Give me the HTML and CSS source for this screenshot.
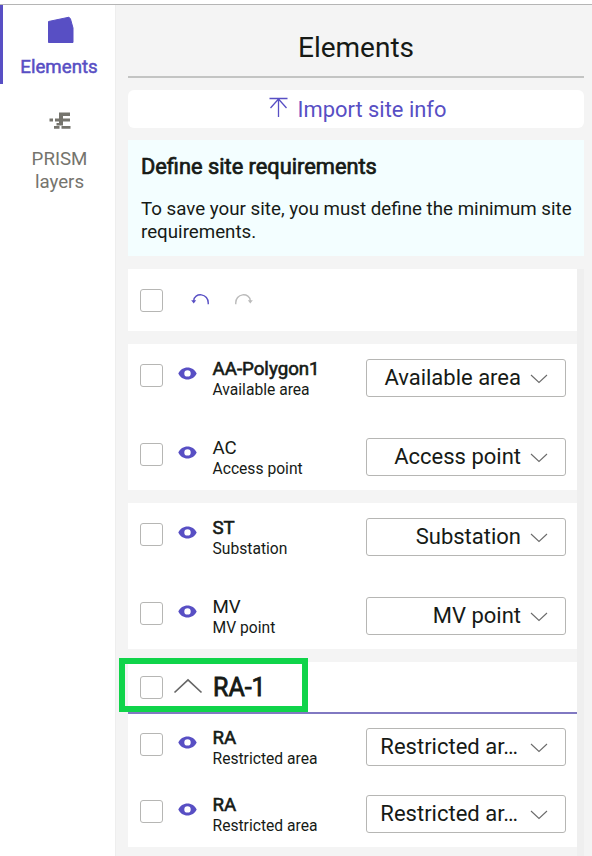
FILE: index.html
```html
<!DOCTYPE html>
<html lang="en">
<head>
<meta charset="utf-8">
<title>Elements</title>
<link rel="stylesheet" href="styles.css">
</head>
<body>
<svg class="defs" width="0" height="0">
  <symbol id="eye" viewBox="0 0 19 13"><path fill-rule="evenodd" d="M0.3 6.4C2 2.6 5.5.4 9.5.4s7.500 2.200 9.200 6c-1.700 3.800-5.200 6-9.200 6s-7.500-2.200-9.200-6ZM9.500 3.200a3.200 3.200 0 1 0 0 6.400 3.200 3.200 0 0 0 0-6.400Z" fill="#584fc4"/></symbol>
  <symbol id="down" viewBox="0 0 18 10"><path d="M1 1l8 7.500L17 1" fill="none" stroke="#6b6b6b" stroke-width="1.100"/></symbol>
</svg>
<div class="app">
  <nav class="sidebar">
    <a class="nav-item active">
      <svg width="28" height="28" viewBox="0 0 28 28"><path d="M1.500 5.500L22 1.200 23.500 3 26 12v14.500H1.500Z" fill="#584fc4" stroke="#584fc4" stroke-linejoin="round"/></svg>
      <span>Elements</span>
    </a>
    <a class="nav-item">
      <svg width="24" height="18" viewBox="0 0 24 18" fill="#75746d"><path d="M1.500 6.500h3.500v3h-3.500zM7 6.500h4V0.500h11v3.500h-7v2.500h7v3h-7v4h-4V9.500H7zM8.500 11h2.500v2.500H8.500zM6 14h5.500v2.800H6zM13.500 14h9v2.800h-9z"/></svg>
      <span>PRISM<br>layers</span>
    </a>
  </nav>
  <main class="panel">
    <h1 class="panel-title">Elements</h1>
    <button class="import">
      <svg width="19" height="21" viewBox="0 0 19 21"><path d="M.5 1.500h18M9.500 1.500V20M1.500 11l8-9 8 9" fill="none" stroke="#584fc4" stroke-width="1.300"/></svg>
      <span>Import site info</span>
    </button>
    <section class="notice">
      <h2>Define site requirements</h2>
      <p>To save your site, you must define the minimum site requirements.</p>
    </section>
    <div class="list">
      <div class="card toolbar">
        <i class="check"></i>
        <svg width="19" height="12" viewBox="0 0 19 12"><path d="M17.200 10.200C18.300-1.700 2.700-1.700 2.700 7" fill="none" stroke="#584fc4" stroke-width="1.400"/><path d="M.2 6.300h5L2.700 9.600Z" fill="#584fc4"/></svg>
        <svg width="19" height="12" viewBox="0 0 19 12"><path d="M1.800 10.200C.7-1.700 16.300-1.700 16.300 7" fill="none" stroke="#bbb" stroke-width="1.400"/><path d="M18.800 6.300h-5l2.500 3.300Z" fill="#bbb"/></svg>
      </div>
      <div class="card">
        <div class="row"><i class="check"></i><svg class="eye"><use href="#eye"/></svg><div class="label"><b>AA-Polygon1</b><small>Available area</small></div><div class="select"><span>Available area</span><svg><use href="#down"/></svg></div></div>
        <div class="row"><i class="check"></i><svg class="eye"><use href="#eye"/></svg><div class="label"><span class="name">AC</span><small>Access point</small></div><div class="select"><span>Access point</span><svg><use href="#down"/></svg></div></div>
      </div>
      <div class="card">
        <div class="row"><i class="check"></i><svg class="eye"><use href="#eye"/></svg><div class="label"><b>ST</b><small>Substation</small></div><div class="select"><span>Substation</span><svg><use href="#down"/></svg></div></div>
        <div class="row"><i class="check"></i><svg class="eye"><use href="#eye"/></svg><div class="label"><span class="name">MV</span><small>MV point</small></div><div class="select"><span>MV point</span><svg><use href="#down"/></svg></div></div>
      </div>
      <div class="card group">
        <div class="group-head"><i class="check"></i><svg width="30" height="16" viewBox="0 0 30 16"><path d="M1.500 14.500L15 2l13.500 12.500" fill="none" stroke="#666" stroke-width="1.700"/></svg><b>RA-1</b><div class="highlight"></div></div>
        <div class="group-rows">
          <div class="row"><i class="check"></i><svg class="eye"><use href="#eye"/></svg><div class="label"><b>RA</b><small>Restricted area</small></div><div class="select wide"><span>Restricted ar…</span><svg><use href="#down"/></svg></div></div>
          <div class="row"><i class="check"></i><svg class="eye"><use href="#eye"/></svg><div class="label"><b>RA</b><small>Restricted area</small></div><div class="select wide"><span>Restricted ar…</span><svg><use href="#down"/></svg></div></div>
        </div>
      </div>
    </div>
  </main>
</div>
</body>
</html>
```
FILE: styles.css
```css
* { box-sizing: border-box; }
body { margin: 0; height: 856px; overflow: hidden; background: #fff; color: #161a16; font-family: Roboto, "Liberation Sans", sans-serif; }
.defs { position: absolute; }
svg { display: block; flex: none; }
.app { display: flex; height: 852px; margin-top: 4px; border-top: 1px solid #b5b5b5; }
.sidebar { width: 116px; flex: none; border-right: 1px solid #eee; }
.nav-item { display: flex; flex-direction: column; align-items: center; color: #75746d; font-size: 18.700px; line-height: 23px; text-align: center; padding: 28px 0 0 4px; }
.nav-item span { margin-top: 18px; }
.nav-item.active { height: 79px; padding: 11px 3px 0 3px; border-left: 3px solid #584fc4; color: #584fc4; -webkit-text-stroke: .5px #584fc4; }
.nav-item.active svg { margin-left: 3px; }
.nav-item.active span { margin-top: 12px; }
.panel { flex: 1; background: #f4f4f4; padding: 0 8px 0 12px; overflow: hidden; }
.panel-title { margin: 0; height: 73px; padding-top: 26px; border-bottom: 2px solid #c3c4c3; font-size: 28px; line-height: 34px; font-weight: 400; text-align: center; }
.import { display: flex; width: 100%; height: 38px; margin: 12px 0; padding: 1px 0 0 3px; justify-content: center; align-items: center; gap: 10px; border: 0; border-radius: 6px; background: #fff; color: #584fc4; font: 400 21.900px/30px Roboto, sans-serif; }
.import svg { margin-top: -5px; }
.notice { height: 116px; padding: 13px 0 0 13px; background: #f3feff; }
.notice h2 { margin: 0 0 18px; font-size: 21.800px; line-height: 27px; font-weight: 400; -webkit-text-stroke: .7px; }
.notice p { margin: 0; font-size: 18.740px; line-height: 23px; }
.list { display: flex; flex-direction: column; gap: 13px; margin-top: 13px; height: 600px; border-right: 7px solid #efefef; }
.card { flex: none; background: #fff; height: 146px; padding: 15px 11px 0 12px; display: flex; flex-direction: column; gap: 41.400px; }
.card.toolbar { height: 62px; flex-direction: row; align-items: center; gap: 24px; padding: 0 0 0 12px; }
.check { flex: none; width: 23px; height: 23px; border: 1.500px solid #b6b6b4; border-radius: 3px; background: #fff; }
.toolbar .check { margin-right: 4px; }
.toolbar svg { margin-top: -1px; }
.row { display: flex; height: 38px; }
.row .check { margin-top: 5px; }
.eye { width: 19px; height: 13px; margin: 8px 15.500px 0 15px; }
.label { width: 153px; flex: none; margin-top: -1.500px; }
.label b, .name { display: block; font-size: 18.700px; line-height: 23px; font-weight: 400; }
.label b { -webkit-text-stroke: .6px; }
.label small { display: block; font-size: 15.650px; line-height: 18px; }
.select { flex: 1; min-width: 0; display: flex; align-items: center; justify-content: flex-end; gap: 9px; padding: 0 17px 0 12px; border: 1.500px solid #b6b6b4; border-radius: 3px; font-size: 22px; line-height: 30px; white-space: nowrap; }
.select svg { width: 18px; height: 10px; margin-top: 2px; }
.select.wide { gap: 12px; }
.group { height: 185px; padding: 0; gap: 0; }
.group-head { position: relative; display: flex; align-items: center; height: 52px; padding-left: 12px; border-bottom: 2px solid #8179c2; }
.group-head svg { margin: -3px 10px 0 10px; }
.group-head b { font-size: 25px; font-weight: 400; -webkit-text-stroke: .8px; }
.highlight { position: absolute; left: -9px; top: -4px; width: 189px; height: 54px; border: 6px solid #10d44a; }
.group-rows { display: flex; flex-direction: column; gap: 29px; padding: 14px 11px 0 12px; }
```
